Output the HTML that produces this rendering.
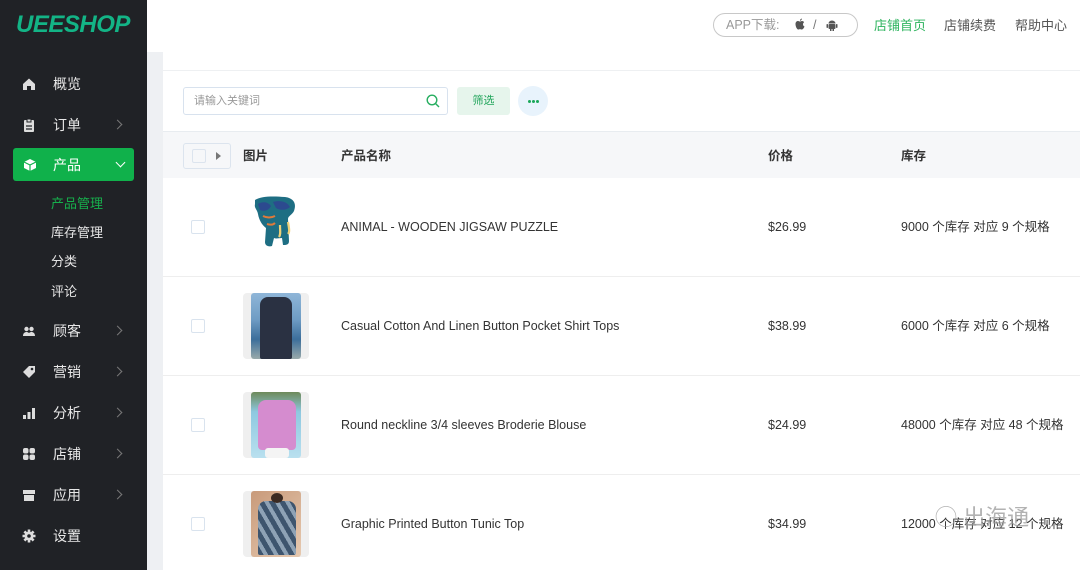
<!DOCTYPE html>
<html><head><meta charset="utf-8"><style>
*{margin:0;padding:0;box-sizing:border-box}
body{width:1080px;height:570px;overflow:hidden;background:#eef0f3;font-family:"Liberation Sans","Noto Sans CJK SC",sans-serif;position:relative}
.side{position:absolute;left:0;top:0;width:147px;height:570px;background:#202226}
.logo{position:absolute;left:16px;top:11px;font:italic bold 24px "Liberation Sans",sans-serif;color:#13b486;letter-spacing:-0.5px}
.mi{position:absolute;left:0;width:147px;height:32px;color:#e8e8e8;font-size:14px;line-height:1}
.mi .t{position:absolute;left:53px;top:9px}
.mi .ic{position:absolute;left:22px;top:9px;width:14px;height:14px}
.mi .ar{position:absolute;left:114px;top:12px;width:7px;height:7px;border-right:1.5px solid #777;border-top:1.5px solid #777;transform:rotate(45deg)}
.act{left:13px;width:121px;background:#10b14b;border-radius:3px}
.sub{position:absolute;left:51px;font-size:13px;color:#e6e6e6;line-height:1}
.top{position:absolute;left:147px;top:0;width:933px;height:52px;background:#fff}
.app{position:absolute;left:713px;top:13px;width:145px;height:24px;border:1px solid #c8c8c8;border-radius:12px;font-size:12.5px;color:#999;padding:5px 0 0 12px;line-height:1}
.tl{position:absolute;top:19px;font-size:13px;color:#555;line-height:1}
.main{position:absolute;left:163px;top:52px;width:917px;height:518px;background:#fff}
.line{position:absolute;left:0;right:0;height:1px;background:#eef0f2}
.search{position:absolute;left:20px;top:35px;width:265px;height:28px;border:1px solid #d8e2ee;border-radius:3px;font-size:11px;color:#999;padding:8px 0 0 10px;line-height:1}
.btn{position:absolute;left:294px;top:35px;width:53px;height:28px;background:#e6f5ec;border-radius:3px;color:#21a55b;font-size:11px;text-align:center;line-height:28px}
.more{position:absolute;left:355px;top:34px;width:30px;height:30px;border-radius:50%;background:#e8f3fc}
.more i{position:absolute;top:14px;width:3px;height:3px;border-radius:50%;background:#1aa75a}
.thead{position:absolute;left:0;top:79px;width:917px;height:47px;background:#f6f7f9;border-top:1px solid #e8ecf0}
.th{position:absolute;top:18px;font-size:12.5px;font-weight:bold;color:#333;line-height:1}
.cb{position:absolute;width:14px;height:14px;border:1px solid #d9e3ee;border-radius:2px;background:#fff}
.row{position:absolute;left:0;width:917px;height:99px;border-bottom:1px solid #eeeeee}
.td{position:absolute;top:43px;font-size:12.5px;color:#333;line-height:1}
.img{position:absolute;left:80px;top:16px;width:66px;height:66px;background:#efefef;border-radius:4px;overflow:hidden}
.img div{position:absolute;left:8px;top:0;width:50px;height:66px;border-radius:3px}
</style></head><body>
<div class="side">
<div class="logo">UEESHOP</div>
<div class="mi" style="top:68px"><svg class="ic" viewBox="0 0 14 14"><path d="M1 7L7 1.5 13 7V13H9V9H5V13H1Z" fill="#ddd"/></svg><span class="t">概览</span></div>
<div class="mi" style="top:109px"><svg class="ic" viewBox="0 0 14 14"><rect x="2" y="2" width="10" height="12" rx="1" fill="#ddd"/><rect x="5" y="1" width="4" height="3" fill="#ddd" stroke="#202226"/><path d="M4 8h6M4 11h6" stroke="#202226" stroke-width="1.2"/></svg><span class="t">订单</span><i class="ar"></i></div>
<div class="mi act" style="top:148px;height:33px"><svg class="ic" style="left:10px;top:10px" viewBox="0 0 14 14"><path d="M7 1L13 4V10L7 13 1 10V4Z" fill="#fff"/><path d="M1 4L7 7 13 4M7 7V13" stroke="#10b14b" stroke-width="1.2" fill="none"/></svg><span class="t" style="left:40px;top:10px;color:#fff">产品</span><i class="ar" style="left:104px;top:11px;transform:rotate(135deg);border-color:#fff"></i></div>
<div class="sub" style="top:197px;color:#16b04c">产品管理</div>
<div class="sub" style="top:226px">库存管理</div>
<div class="sub" style="top:255px">分类</div>
<div class="sub" style="top:285px">评论</div>
<div class="mi" style="top:315px"><svg class="ic" viewBox="0 0 14 14"><circle cx="4.5" cy="5" r="2.2" fill="#ddd"/><circle cx="9.5" cy="5" r="2.2" fill="#ddd"/><path d="M1 12c0-3 2-4 3.5-4s3.5 1 3.5 4zM6 12c0-3 2-4 3.5-4S13 9 13 12z" fill="#ddd"/></svg><span class="t">顾客</span><i class="ar"></i></div>
<div class="mi" style="top:356px"><svg class="ic" viewBox="0 0 14 14"><path d="M13 1H7L1 7 7 13 13 7Z" fill="#ddd"/><circle cx="10" cy="4" r="1.3" fill="#202226"/></svg><span class="t">营销</span><i class="ar"></i></div>
<div class="mi" style="top:397px"><svg class="ic" viewBox="0 0 14 14"><rect x="1" y="9" width="3" height="4" fill="#ddd"/><rect x="5.5" y="6" width="3" height="7" fill="#ddd"/><rect x="10" y="2" width="3" height="11" fill="#ddd"/></svg><span class="t">分析</span><i class="ar"></i></div>
<div class="mi" style="top:438px"><svg class="ic" viewBox="0 0 14 14"><rect x="1" y="1" width="5.5" height="5.5" rx="2" fill="#ddd"/><rect x="7.5" y="1" width="5.5" height="5.5" rx="2" fill="#ddd"/><rect x="1" y="7.5" width="5.5" height="5.5" rx="2" fill="#ddd"/><rect x="7.5" y="7.5" width="5.5" height="5.5" rx="2" fill="#ddd"/></svg><span class="t">店铺</span><i class="ar"></i></div>
<div class="mi" style="top:479px"><svg class="ic" viewBox="0 0 14 14"><rect x="1" y="2" width="12" height="4" fill="#ddd"/><rect x="2" y="7" width="10" height="6" fill="#ddd"/></svg><span class="t">应用</span><i class="ar"></i></div>
<div class="mi" style="top:520px"><svg class="ic" viewBox="0 0 14 14"><circle cx="7" cy="7" r="4.5" fill="#ddd"/><path d="M7 0.5V13.5M0.5 7H13.5M2.4 2.4L11.6 11.6M11.6 2.4L2.4 11.6" stroke="#ddd" stroke-width="2.6"/><circle cx="7" cy="7" r="1.8" fill="#202226"/></svg><span class="t">设置</span></div>
</div>
<div class="top"></div>
<div class="app">APP下载: <svg style="position:absolute;left:80px;top:4px" width="12" height="14" viewBox="0 0 12 14"><path d="M8 3c-1 0-1.5.6-2 .6S4.8 3 4 3C2.5 3 1.5 4.3 1.5 6c0 2.5 1.5 5.5 2.7 5.5.7 0 1-.4 1.8-.4s1 .4 1.8.4C9 11.5 10 9.8 10.5 8.5 9.5 8 9 7.2 9 6.2c0-.9.5-1.6 1.1-2C9.6 3.4 8.8 3 8 3zM7.9 0.5C8 1.6 7 2.8 6 2.7 5.9 1.6 7 .6 7.9.5z" fill="#555"/></svg><span style="position:absolute;left:99px;top:5px;color:#777">/</span><svg style="position:absolute;left:112px;top:4px" width="12" height="14" viewBox="0 0 12 14"><path d="M2.5 5.5a3.5 3 0 0 1 7 0z" fill="#555"/><rect x="2.5" y="6" width="7" height="5" rx="1" fill="#555"/><rect x="0.5" y="6" width="1.5" height="4" rx=".7" fill="#555"/><rect x="10" y="6" width="1.5" height="4" rx=".7" fill="#555"/><rect x="4" y="10" width="1.5" height="3" fill="#555"/><rect x="6.5" y="10" width="1.5" height="3" fill="#555"/></svg></div>
<div class="tl" style="left:874px;color:#2fb45f">店铺首页</div>
<div class="tl" style="left:944px">店铺续费</div>
<div class="tl" style="left:1015px">帮助中心</div>
<div class="main">
<div class="line" style="top:18px"></div>
<div class="search">请输入关键词<svg style="position:absolute;right:7px;top:6px" width="14" height="14" viewBox="0 0 14 14"><circle cx="6" cy="6" r="4.8" stroke="#27ae60" stroke-width="1.4" fill="none"/><path d="M9.5 9.5L13 13" stroke="#27ae60" stroke-width="1.4"/></svg></div>
<div class="btn">筛选</div>
<div class="more"><i style="left:10px"></i><i style="left:14px"></i><i style="left:18px"></i></div>
<div class="thead">
<div style="position:absolute;left:20px;top:11px;width:48px;height:26px;border:1px solid #dce4ee;border-radius:3px"><div class="cb" style="left:8px;top:5px;border-color:#dce4ee;background:#f6f7f9"></div><div style="position:absolute;left:32px;top:8px;border-left:5px solid #777;border-top:4px solid transparent;border-bottom:4px solid transparent"></div></div>
<div class="th" style="left:80px">图片</div><div class="th" style="left:178px">产品名称</div><div class="th" style="left:605px">价格</div><div class="th" style="left:738px">库存</div>
</div>
<div class="row" style="top:126px"><div class="cb" style="left:28px;top:42px"></div>
<div style="position:absolute;left:80px;top:16px;width:66px;height:66px"><svg width="66" height="66" viewBox="0 0 66 66"><path d="M12 6c6-4 18-4 30-3 8 1 12 6 9 14-2 4-6 5-6 8l1 22c0 4-3 4-6 4l-1-7c-3 0-6 1-8 0l-2 8c-3 1-7 0-7-4l1-14c-4-3-7-8-8-14-1-5-4-6-3-10z" fill="#1e6e83"/><path d="M15 10c5-3 10-2 13 2-2 4-6 6-11 4zM30 8c6-2 14-1 17 5-3 3-9 4-14 1z" fill="#2c4a8f"/><path d="M20 22c4 2 8 2 12 0M24 30c3 1 6 1 8-1" stroke="#e07a3a" stroke-width="2" fill="none"/><path d="M45 28c1 6 2 10 0 12M37 31c0 6 1 9-1 12" stroke="#f0d27a" stroke-width="2.2" fill="none"/></svg></div>
<div class="td" style="left:178px">ANIMAL - WOODEN JIGSAW PUZZLE</div><div class="td" style="left:605px">$26.99</div><div class="td" style="left:738px">9000 个库存 对应 9 个规格</div></div>
<div class="row" style="top:225px"><div class="cb" style="left:28px;top:42px"></div><div class="img"><div style="background:linear-gradient(180deg,#8fb6d8 0,#6f9cc4 40%,#3c6e9a 70%,#9aa 100%)"><div style="position:absolute;left:9px;top:4px;width:32px;height:62px;background:#2a3142;border-radius:8px 8px 2px 2px"></div></div></div>
<div class="td" style="left:178px">Casual Cotton And Linen Button Pocket Shirt Tops</div><div class="td" style="left:605px">$38.99</div><div class="td" style="left:738px">6000 个库存 对应 6 个规格</div></div>
<div class="row" style="top:324px"><div class="cb" style="left:28px;top:42px"></div><div class="img"><div style="background:linear-gradient(180deg,#6d8a5a 0,#8ec8e0 30%,#b9e0ef 100%)"><div style="position:absolute;left:7px;top:8px;width:38px;height:50px;background:#d58ccf;border-radius:8px 8px 4px 4px"></div><div style="position:absolute;left:14px;top:56px;width:24px;height:10px;background:#f4f4f4"></div></div></div>
<div class="td" style="left:178px">Round neckline 3/4 sleeves Broderie Blouse</div><div class="td" style="left:605px">$24.99</div><div class="td" style="left:738px">48000 个库存 对应 48 个规格</div></div>
<div class="row" style="top:423px;border:none;height:95px"><div class="cb" style="left:28px;top:42px"></div><div class="img"><div style="background:linear-gradient(135deg,#c89a7a,#e6c9b0)"><div style="position:absolute;left:7px;top:10px;width:38px;height:54px;background:repeating-linear-gradient(60deg,#3e556e 0 5px,#8ea2b5 5px 9px);border-radius:8px 8px 2px 2px"></div><div style="position:absolute;left:20px;top:2px;width:12px;height:10px;background:#3a2a22;border-radius:50%"></div></div></div>
<div class="td" style="left:178px">Graphic Printed Button Tunic Top</div><div class="td" style="left:605px">$34.99</div><div class="td" style="left:738px">12000 个库存 对应 12 个规格</div>
<div style="position:absolute;left:772px;top:32px;font-size:22px;color:#999;opacity:.75;line-height:1">◯ 出海通</div></div>
</div>
</body></html>
